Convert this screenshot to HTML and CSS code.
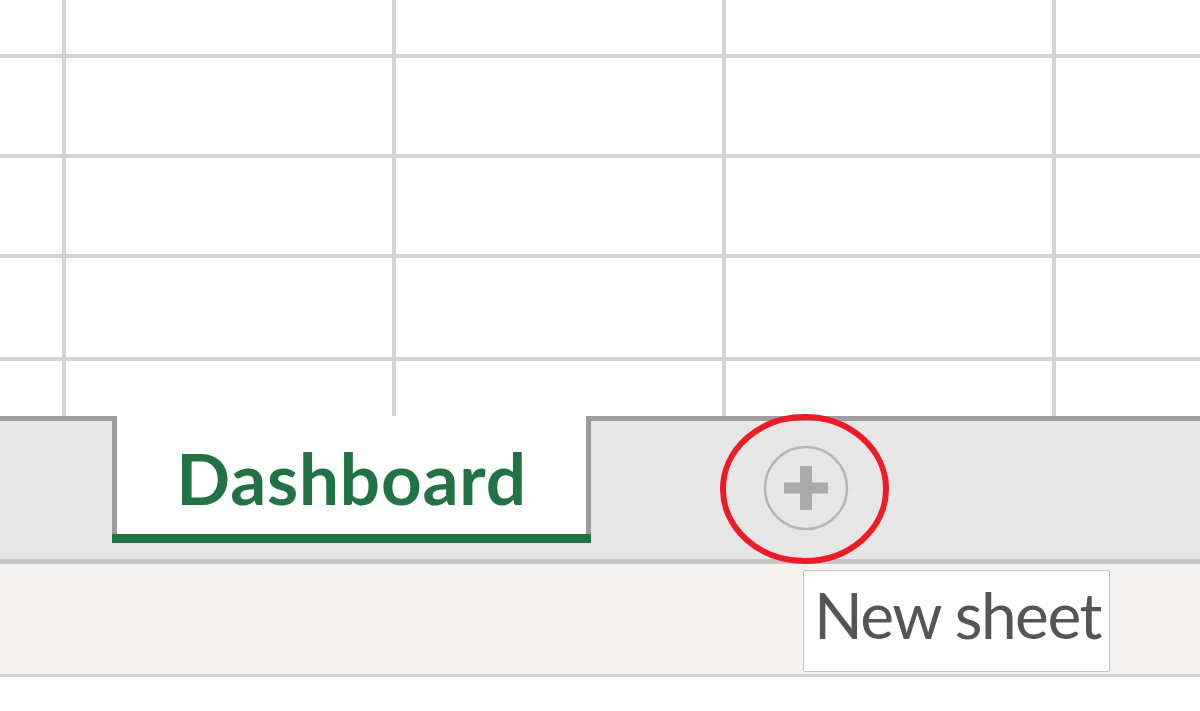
FILE: index.html
```html
<!DOCTYPE html>
<html>
<head>
<meta charset="utf-8">
<link rel="stylesheet" href="styles.css">
</head>
<body>
<div class="page">
  <div class="sheet">
    <div class="cell"></div><div class="cell"></div><div class="cell"></div><div class="cell"></div><div class="cell"></div>
    <div class="cell"></div><div class="cell"></div><div class="cell"></div><div class="cell"></div><div class="cell"></div>
    <div class="cell"></div><div class="cell"></div><div class="cell"></div><div class="cell"></div><div class="cell"></div>
    <div class="cell"></div><div class="cell"></div><div class="cell"></div><div class="cell"></div><div class="cell"></div>
    <div class="cell"></div><div class="cell"></div><div class="cell"></div><div class="cell"></div><div class="cell"></div>
  </div>
  <div class="tabbar">
    <div class="tab-filler"></div>
    <div class="tab">
      <div class="tab-body"><span class="tab-label">Dashboard</span></div>
      <div class="tab-underline"></div>
    </div>
    <div class="tab-rest">
      <svg class="add-sheet" width="88" height="88" viewBox="0 0 88 88">
        <circle cx="44" cy="44" r="41" fill="none" stroke="#b6b6b6" stroke-width="2.5"/>
        <rect x="22" y="38.5" width="44" height="11" fill="#aaaaaa"/>
        <rect x="38" y="22" width="12" height="44" fill="#aaaaaa"/>
      </svg>
    </div>
  </div>
  <div class="statusbar"></div>
  <div class="below"></div>

  <svg class="highlight" width="178" height="160" viewBox="0 0 178 160">
    <ellipse cx="88.5" cy="79" rx="81.5" ry="72" fill="none" stroke="#ed1c24" stroke-width="6"/>
  </svg>
  <div class="tooltip"><span class="tooltip-text">New sheet</span></div>
</div>
</body>
</html>
```

FILE: styles.css
```css
html, body {
  margin: 0;
  padding: 0;
  background: #ffffff;
}

.page {
  position: relative;
  width: 1200px;
  height: 711px;
  overflow: hidden;
  font-family: "Lato", "Open Sans", sans-serif;
}

.sheet {
  display: grid;
  grid-template-columns: 62px 326px 326px 326px 1fr;
  grid-template-rows: 54px 96px 96px 99px 1fr;
  gap: 4px;
  height: 416px;
  background: #d4d4d4;
}

.cell {
  background: #ffffff;
}

.tabbar {
  display: flex;
  height: 143px;
  background: #e6e6e6;
  border-bottom: 5px solid #c6c6c6;
}

.tab-filler {
  width: 112px;
  border-top: 5px solid #9f9f9f;
}

.tab {
  width: 479px;
  display: flex;
  flex-direction: column;
  margin-bottom: 16px;
}

.tab-body {
  flex: 1;
  background: #ffffff;
  border-left: 5px solid #9c9c9c;
  border-right: 5px solid #9c9c9c;
  display: flex;
  justify-content: center;
  padding-top: 19px;
}

.tab-label {
  font-family: "Lato", sans-serif;
  font-weight: 700;
  font-size: 71px;
  line-height: 1.2;
  letter-spacing: 0.8px;
  color: #217346;
  height: 85px;
}

.tab-underline {
  height: 9px;
  background: #217346;
}

.tab-rest {
  flex: 1;
  border-top: 5px solid #9f9f9f;
  padding-top: 23px;
  padding-left: 171px;
}

.add-sheet {
  display: block;
}

.statusbar {
  height: 110px;
  background: #f3f2f1;
  border-bottom: 3px solid #d3d3d3;
}

.below {
  height: 34px;
  background: #ffffff;
}

.highlight {
  position: absolute;
  left: 716px;
  top: 410px;
}

.tooltip {
  position: absolute;
  left: 803px;
  top: 570px;
  width: 305px;
  height: 100px;
  background: #ffffff;
  border: 1px solid #c4c4c4;
  border-radius: 2px;
}

.tooltip-text {
  display: block;
  padding-top: 6px;
  padding-left: 10px;
  font-family: "Lato", sans-serif;
  font-size: 64px;
  line-height: 1.2;
  letter-spacing: -1.5px;
  color: #555555;
  white-space: nowrap;
}
```
